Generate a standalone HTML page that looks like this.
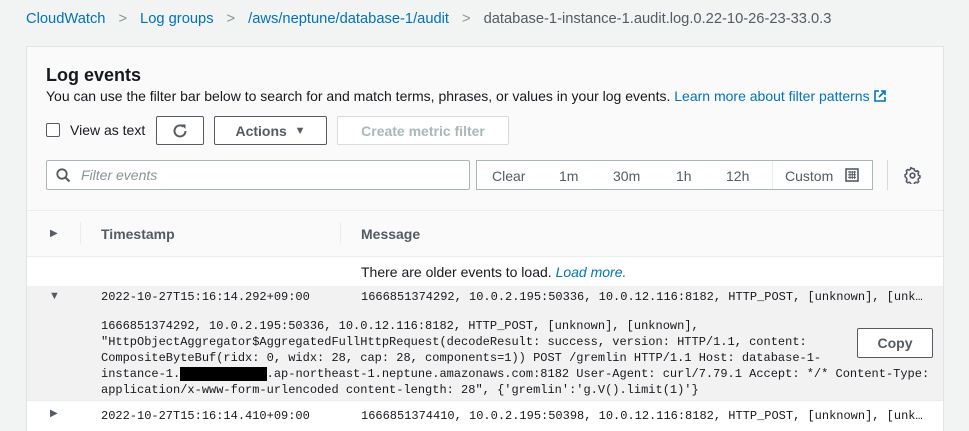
<!DOCTYPE html>
<html><head><meta charset="utf-8"><style>
*{box-sizing:border-box;margin:0;padding:0}
html,body{width:969px;height:431px;overflow:hidden}
body{background:#f2f3f3;font-family:"Liberation Sans",Arial,sans-serif;color:#16191f;position:relative}
.a{position:absolute;white-space:nowrap}
.link{color:#0073bb}
.mono{font-family:"Liberation Mono",monospace;font-size:12px;color:#16191f}
.btn{position:absolute;border:1px solid #545b64;border-radius:2px;background:#fff;font-weight:bold;font-size:14px;color:#545b64;display:flex;align-items:center;justify-content:center}
</style></head><body>
<div class="a" style="left:26px;top:11px;font-size:14.7px"><span class="link">CloudWatch</span><span style="color:#879596;margin:0 13px">&gt;</span><span class="link">Log groups</span><span style="color:#879596;margin:0 13px">&gt;</span><span class="link">/aws/neptune/database-1/audit</span><span style="color:#879596;margin:0 13px">&gt;</span><span style="color:#545b64">database-1-instance-1.audit.log.0.22-10-26-23-33.0.3</span></div>

<div class="a" style="left:26px;top:46px;width:918px;height:400px;background:#fafafa;border:1px solid #e1e4e4"></div>
<div class="a" style="left:46px;top:65px;font-size:18px;font-weight:bold">Log events</div>
<div class="a" style="left:46px;top:88px;font-size:14px">You can use the filter bar below to search for and match terms, phrases, or values in your log events. <span class="link">Learn more about filter patterns</span> <svg width="12" height="12" viewBox="0 0 12 12" style="vertical-align:-1px"><path d="M5 1H1v10h10V7M7 1h4v4M11 1L5 7" fill="none" stroke="#0073bb" stroke-width="1.6"/></svg></div>

<div class="a" style="left:46px;top:123px;width:14px;height:14px;border:1px solid #545b64;border-radius:2px;background:#fff"></div>
<div class="a" style="left:70px;top:122px;font-size:14px">View as text</div>
<div class="btn" style="left:156px;top:116px;width:48px;height:29px"><svg width="16" height="16" viewBox="0 0 16 16"><path d="M13.5 8A5.5 5.5 0 1 1 11.5 3.7" fill="none" stroke="#545b64" stroke-width="2"/><path d="M9 1.5h4.5V6z" fill="#545b64"/></svg></div>
<div class="btn" style="left:214px;top:116px;width:113px;height:29px">Actions&nbsp;&nbsp;<span style="font-size:11px">▼</span></div>
<div class="btn" style="left:337px;top:116px;width:172px;height:29px;border-color:#d5dbdb;color:#aab7b8">Create metric filter</div>

<div class="a" style="left:46px;top:160px;width:424px;height:30px;border:1px solid #aab7b8;border-radius:2px;background:#fff"></div>
<svg class="a" style="left:56px;top:168px" width="15" height="15" viewBox="0 0 15 15"><circle cx="6" cy="6" r="4.7" fill="none" stroke="#545b64" stroke-width="1.8"/><path d="M9.5 9.5l4 4" stroke="#545b64" stroke-width="2"/></svg>
<div class="a" style="left:81px;top:167px;font-size:14px;font-style:italic;color:#879596">Filter events</div>

<div class="a" style="left:476px;top:160px;width:397px;height:30px;border:1px solid #aab7b8;background:#fff"></div>
<div class="a" style="left:772px;top:161px;width:1px;height:28px;background:#eaeded"></div>
<div class="a" style="left:492px;top:168px;font-size:14px;color:#545b64">Clear</div>
<div class="a" style="left:559px;top:168px;font-size:14px;color:#545b64">1m</div>
<div class="a" style="left:613px;top:168px;font-size:14px;color:#545b64">30m</div>
<div class="a" style="left:676px;top:168px;font-size:14px;color:#545b64">1h</div>
<div class="a" style="left:726px;top:168px;font-size:14px;color:#545b64">12h</div>
<div class="a" style="left:785px;top:168px;font-size:14px;color:#545b64">Custom</div>
<svg class="a" style="left:845px;top:168px" width="14" height="14" viewBox="0 0 14 14"><rect x="1" y="1" width="12" height="12" fill="none" stroke="#545b64" stroke-width="1.6"/><path d="M3 4h8M3 6.7h8M3 9.4h8M5 3v8M7.3 3v8M9.6 3v8" stroke="#545b64" stroke-width="1"/></svg>
<div class="a" style="left:887px;top:160px;width:1px;height:30px;background:#d5dbdb"></div>
<svg class="a" style="left:904px;top:167px" width="17" height="17" viewBox="0 0 16 16"><circle cx="8" cy="8" r="2.2" fill="none" stroke="#545b64" stroke-width="1.6"/><path d="M8 1.5l1.5.3.4 1.5 1.3.8 1.5-.5 1.1 1.1-.5 1.5.3 1.5 1.4.7v1.6l-1.4.7-.3 1.5.5 1.5-1.1 1.1-1.5-.5-1.3.8-.4 1.5H6.5l-.4-1.5-1.3-.8-1.5.5-1.1-1.1.5-1.5-.3-1.5L1 8.8V7.2l1.4-.7.3-1.5-.5-1.5 1.1-1.1 1.5.5 1.3-.8.4-1.5z" fill="none" stroke="#545b64" stroke-width="1.5"/></svg>

<div class="a" style="left:27px;top:210px;width:916px;height:1px;background:#eaeded"></div>
<div class="a" style="left:50px;top:228px;font-size:10px;color:#545b64">▶</div>
<div class="a" style="left:80px;top:222px;width:1px;height:22px;background:#eaeded"></div>
<div class="a" style="left:340px;top:222px;width:1px;height:22px;background:#eaeded"></div>
<div class="a" style="left:101px;top:226px;font-size:14px;font-weight:bold;color:#545b64">Timestamp</div>
<div class="a" style="left:361px;top:226px;font-size:14px;font-weight:bold;color:#545b64">Message</div>

<div class="a" style="left:27px;top:256px;width:916px;height:30px;background:#fff;border-top:1px solid #eaeded"></div>
<div class="a" style="left:361px;top:264px;font-size:14px">There are older events to load. <i class="link">Load more.</i></div>

<div class="a" style="left:27px;top:286px;width:916px;height:114px;background:#f2f2f2"></div>
<div class="a" style="left:49px;top:290px;font-size:11px;color:#545b64">▼</div>
<div class="a mono" style="left:101px;top:290px">2022-10-27T15:16:14.292+09:00</div>
<div class="a mono" style="left:361px;top:290px">1666851374292, 10.0.2.195:50336, 10.0.12.116:8182, HTTP_POST, [unknown], [unk…</div>
<div class="a mono" style="left:101px;top:318px;line-height:16px">1666851374292, 10.0.2.195:50336, 10.0.12.116:8182, HTTP_POST, [unknown], [unknown],<br>"HttpObjectAggregator$AggregatedFullHttpRequest(decodeResult: success, version: HTTP/1.1, content:<br>CompositeByteBuf(ridx: 0, widx: 28, cap: 28, components=1)) POST /gremlin HTTP/1.1 Host: database-1-<br>instance-1.<span style="background:#000;color:#000">xxxxxxxxxxxx</span>.ap-northeast-1.neptune.amazonaws.com:8182 User-Agent: curl/7.79.1 Accept: */* Content-Type:<br>application/x-www-form-urlencoded content-length: 28", {'gremlin':'g.V().limit(1)'}</div>
<div class="btn" style="left:857px;top:328px;width:76px;height:30px">Copy</div>

<div class="a" style="left:27px;top:400px;width:916px;height:31px;background:#fff;border-top:1px solid #eaeded"></div>
<div class="a" style="left:50px;top:408px;font-size:10px;color:#545b64">▶</div>
<div class="a mono" style="left:101px;top:409px">2022-10-27T15:16:14.410+09:00</div>
<div class="a mono" style="left:361px;top:409px">1666851374410, 10.0.2.195:50398, 10.0.12.116:8182, HTTP_POST, [unknown], [unk…</div>
</body></html>
